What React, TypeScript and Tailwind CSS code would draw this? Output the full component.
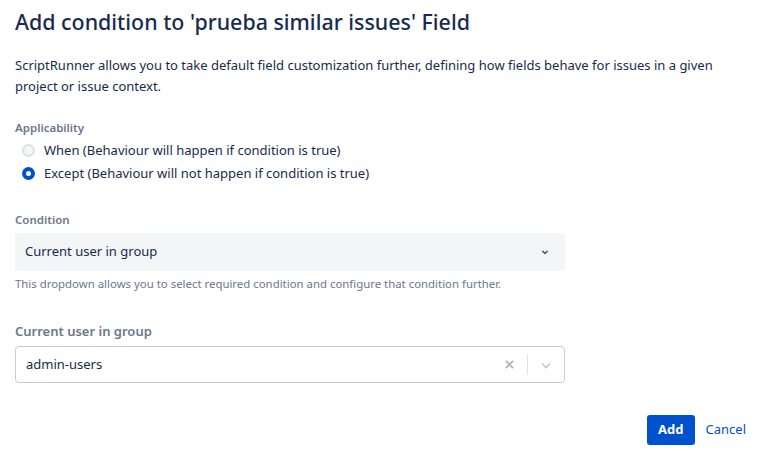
import React from "react";

const font = { fontFamily: '"Noto Sans", "Open Sans", sans-serif' };

const Radio = ({ checked, label }: { checked?: boolean; label: string }) => (
  <label className="flex items-center h-[23px] pl-[7px] gap-[9px] text-[13px] text-[#172B4D]">
    {checked ? (
      <span className="w-[13px] h-[13px] rounded-full bg-[#0052CC] flex items-center justify-center">
        <span className="w-[5px] h-[5px] rounded-full bg-white" />
      </span>
    ) : (
      <span className="w-[13px] h-[13px] rounded-full bg-[#F4F5F7] border-2 border-[#DFE1E6]" />
    )}
    <span>{label}</span>
  </label>
);

const Chevron = ({ color }: { color: string }) => (
  <svg width="18" height="18" viewBox="0 0 24 24">
    <path
      d="M8.292 10.293a1.009 1.009 0 000 1.419l2.939 2.965c.218.215.5.322.779.322s.556-.107.769-.322l2.93-2.955a1.01 1.01 0 000-1.419.987.987 0 00-1.406 0l-2.298 2.317-2.307-2.327a.99.99 0 00-1.406 0z"
      fill={color}
    />
  </svg>
);

export default function App() {
  return (
    <div className="w-[768px] h-[451px] bg-white px-[15px] pt-[7px] overflow-hidden" style={font}>
      <h1 className="text-[21.4px] leading-[30px] font-medium text-[#172B4D]">
        Add condition to 'prueba similar issues' Field
      </h1>

      <p className="mt-[18px] w-[730px] text-[13px] leading-[21px] text-[#172B4D]">
        ScriptRunner allows you to take default field customization further, defining how fields behave for issues in a given project or issue context.
      </p>

      <div className="mt-[23px]">
        <div className="text-[11.5px] leading-[16px] font-semibold text-[#6B778C]">Applicability</div>
        <div className="mt-[3px] flex flex-col">
          <Radio label="When (Behaviour will happen if condition is true)" />
          <Radio checked label="Except (Behaviour will not happen if condition is true)" />
        </div>
      </div>

      <div className="mt-[27px] w-[550px]">
        <div className="text-[11.5px] leading-[16px] font-semibold text-[#6B778C]">Condition</div>
        <div className="mt-[5px] h-[38px] rounded-[3px] bg-[#F4F5F7] flex items-center justify-between pl-[10px] pr-[11px] text-[13px] text-[#172B4D]">
          <span>Current user in group</span>
          <Chevron color="#42526E" />
        </div>
        <div className="mt-[5px] text-[11.4px] leading-[16px] text-[#6B778C]">
          This dropdown allows you to select required condition and configure that condition further.
        </div>
      </div>

      <div className="mt-[29px] w-[550px]">
        <div className="text-[13px] leading-[20px] font-semibold text-[#6B778C]">Current user in group</div>
        <div className="mt-[5px] h-[37px] rounded-[4px] border border-[#CCCCCC] flex items-center pl-[10px] text-[13px] text-[#172B4D]">
          <span className="flex-1">admin-users</span>
          <span className="flex items-center h-full">
            <span className="w-[36px] flex justify-center">
              <svg width="11" height="11" viewBox="0 0 12 12">
                <path d="M2 2l8 8M10 2l-8 8" stroke="#B3B3B3" strokeWidth="1.8" />
              </svg>
            </span>
            <span className="w-px h-[20px] bg-[#DFE1E6]" />
            <span className="w-[36px] flex justify-center">
              <svg width="14" height="14" viewBox="0 0 14 14">
                <path d="M3 5.5l4 4 4-4" stroke="#C1C7D0" strokeWidth="1.6" fill="none" />
              </svg>
            </span>
          </span>
        </div>
      </div>

      <div className="mt-[32px] flex justify-end items-center gap-[4px]">
        <button className="h-[30px] px-[11px] rounded-[3px] bg-[#0052CC] text-white text-[13px] font-bold">
          Add
        </button>
        <button className="h-[30px] px-[7px] text-[13px] text-[#0052CC]">Cancel</button>
      </div>
    </div>
  );
}
